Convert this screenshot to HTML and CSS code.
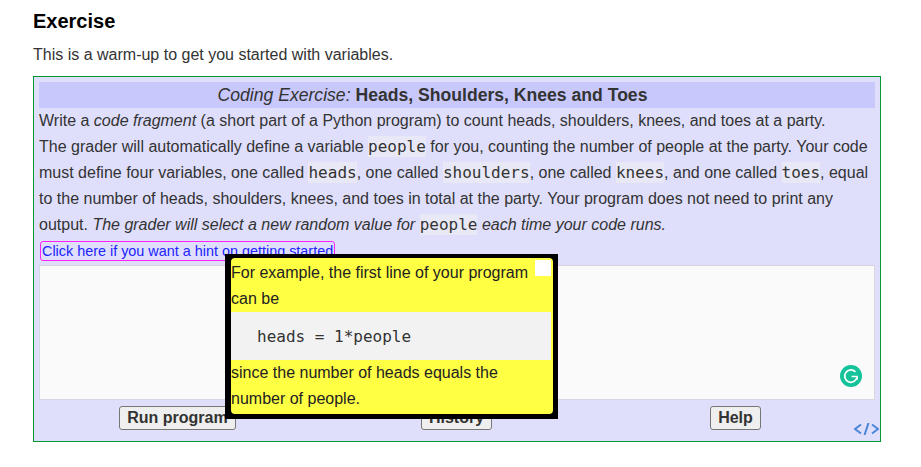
FILE: index.html
```html
<!DOCTYPE html>
<html lang="en">
<head>
    <meta charset="UTF-8">
    <title>Exercise</title>
    <link rel="stylesheet" href="styles.css">
</head>
<body>

<h3 class="section-title">Exercise</h3>
<p class="intro">This is a warm-up to get you started with variables.</p>

<div class="exercise">
    <div class="exercise-title"><i>Coding Exercise:</i> <b>Heads, Shoulders, Knees and Toes</b></div>
    <div class="exercise-text">
        Write a <i>code fragment</i> (a short part of a Python program) to count heads, shoulders, knees, and toes at a party.<br>
        The grader will automatically define a variable <code>people</code> for you, counting the number of people at the party. Your code<br>
        must define four variables, one called <code>heads</code>, one called <code>shoulders</code>, one called <code>knees</code>, and one called <code>toes</code>, equal<br>
        to the number of heads, shoulders, knees, and toes in total at the party. Your program does not need to print any<br>
        output. <i>The grader will select a new random value for <code>people</code> each time your code runs.</i>
    </div>
    <div class="hint-row"><span class="hint-link">Click here if you want a hint on getting started</span></div>
    <div class="editor">
        <svg class="grammarly" width="22" height="22" viewBox="0 0 22 22">
            <circle cx="11" cy="11" r="11" fill="#15c39a"/>
            <path d="M15.4 6.8A6.2 6.2 0 1 0 17 12.4" fill="none" stroke="#fff" stroke-width="1.7"/>
            <path d="M11.5 11.4h5.6v3.4" fill="none" stroke="#fff" stroke-width="1.5"/>
        </svg>
    </div>
    <div class="buttons">
        <button class="btn">Run program</button>
        <button class="btn">History</button>
        <button class="btn">Help</button>
    </div>
    <svg class="embed-icon" width="25" height="12" viewBox="0 0 25 12">
        <path d="M7 1.5L1 6L7 10.5M10.5 12L14.5 0M18 1.5L24 6L18 10.5" fill="none" stroke="#4a86d8" stroke-width="2"/>
    </svg>

    <div class="popup">
        <div class="popup-inner">
            <span class="popup-close"></span>
            <p class="popup-text">For example, the first line of your program can be</p>
            <pre class="popup-code">heads = 1*people</pre>
            <p class="popup-text">since the number of heads equals the number of people.</p>
        </div>
    </div>
</div>

</body>
</html>
```

FILE: styles.css
```css
body {
    margin: 0;
    padding: 0 40px 0 33px;
    font-family: "Liberation Sans", Arial, sans-serif;
    font-size: 16px;
    color: #333;
    background: #fff;
}

.section-title {
    margin: 0;
    padding-top: 10px;
    font-size: 20px;
    line-height: 22px;
    color: #000;
}

.intro {
    margin: 0;
    padding-top: 12px;
    line-height: 22px;
}

.exercise {
    position: relative;
    margin-top: 10px;
    padding: 5px;
    height: 354px;
    border: 1px solid #009933;
    background: #dfdffc;
}

.exercise-title {
    height: 26px;
    line-height: 26px;
    padding-right: 49px;
    text-align: center;
    font-size: 17.6px;
    background: #c8c8fc;
}

.exercise-text {
    line-height: 26px;
    white-space: nowrap;
}

code {
    font-family: "DejaVu Sans Mono", monospace;
    font-size: 16px;
    font-style: normal;
    line-height: 20px;
    padding: 1px 0;
    background: #e8e8f6;
}

.hint-row {
    box-sizing: border-box;
    height: 27px;
    padding: 3px 0 0 1px;
}

.hint-link {
    display: inline-block;
    height: 18px;
    line-height: 19px;
    padding: 0 1px;
    font-size: 14.4px;
    color: #2222ff;
    border: 1px solid #ff22ff;
    border-radius: 3px;
}

.editor {
    position: relative;
    box-sizing: border-box;
    height: 135px;
    border: 1px solid #d8d8e2;
    border-top-color: #d4d4de;
    background: #fafafa;
}

.grammarly {
    position: absolute;
    right: 12px;
    bottom: 12px;
}

.buttons {
    display: grid;
    grid-template-columns: repeat(3, 1fr);
    justify-items: center;
    margin: 6px 0 0 -1px;
}

.btn {
    height: 24px;
    padding: 0 7px;
    font-family: "Liberation Sans", Arial, sans-serif;
    font-size: 16px;
    font-weight: bold;
    color: #333;
    background: #efefef;
    border: 1px solid #767676;
    border-radius: 3px;
}

.embed-icon {
    position: absolute;
    right: 1px;
    bottom: 6px;
}

.popup {
    position: absolute;
    left: 191px;
    top: 177px;
    width: 333px;
    height: 165px;
    box-sizing: border-box;
    padding: 4px 5px 5px 6px;
    background: #000;
}

.popup-inner {
    position: relative;
    height: 100%;
    box-sizing: border-box;
    background: #ffff44;
    border-radius: 4px;
    padding: 2px 2px 0 0;
    color: #222;
}

.popup-text {
    margin: 0;
    line-height: 26px;
}

.popup-code {
    margin: 0;
    height: 48px;
    line-height: 50px;
    padding-left: 26px;
    font-family: "DejaVu Sans Mono", monospace;
    font-size: 16px;
    color: #333;
    background: #f2f2f2;
}

.popup-close {
    position: absolute;
    right: 2px;
    top: 2px;
    width: 16px;
    height: 16px;
    background: #fff;
}
```
